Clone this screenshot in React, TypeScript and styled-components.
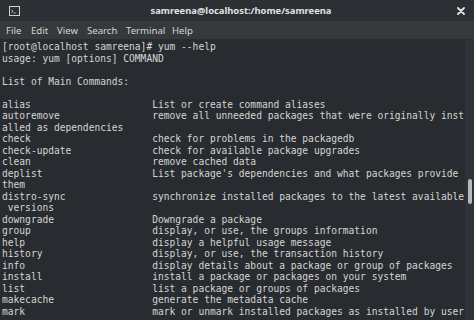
import React from "react";
import styled, { createGlobalStyle } from "styled-components";

const Global = createGlobalStyle`
  html, body { margin: 0; padding: 0; background: #282b2f; }
  body { width: 474px; height: 320px; overflow: hidden; }
`;

const Window = styled.div`
  width: 474px;
  height: 320px;
  display: flex;
  flex-direction: column;
  background: #282b2f;
  overflow: hidden;
`;

const TitleBar = styled.div`
  height: 21px;
  flex: none;
  display: grid;
  grid-template-columns: 30px 1fr 30px;
  align-items: center;
  background: #2c2f33;
  color: #e2e2e2;
  font-family: "Noto Sans", "DejaVu Sans", sans-serif;
  font-weight: 700;
  font-size: 9.4px;
`;

const Title = styled.div`
  text-align: center;
  padding-left: 8px;
`;

const IconBox = styled.div`
  display: flex;
  justify-content: center;
  margin-left: -2px;
`;

const CloseBox = styled.div`
  display: flex;
  justify-content: flex-end;
  padding-right: 9px;
`;

const MenuBar = styled.div`
  height: 18px;
  flex: none;
  display: flex;
  align-items: center;
  padding-left: 6px;
  background: #36393c;
  color: #d4d4d4;
  font-family: "Noto Sans", "DejaVu Sans", sans-serif;
  font-size: 9.6px;
  border-bottom: 1px solid #2a2d30;
`;

const MenuItem = styled.span<{ $w: number }>`
  width: ${(p) => p.$w}px;
`;

const Body = styled.div`
  flex: 1;
  display: flex;
  min-height: 0;
`;

const Screen = styled.pre`
  flex: 1;
  margin: 0;
  padding: 1px 0 0 2px;
  font-family: "DejaVu Sans Mono", monospace;
  font-size: 9.6px;
  line-height: 11.5px;
  color: #d4d6d3;
  white-space: pre;
  overflow: hidden;
`;

const ScrollTrack = styled.div`
  width: 9px;
  flex: none;
  background: #2f3236;
  display: flex;
  justify-content: center;
  padding-top: 139px;
`;

const Thumb = styled.div`
  width: 4px;
  height: 25px;
  border-radius: 2px;
  background: #b8b9ba;
`;

const cmds: [string, string][] = [
  ["alias", "List or create command aliases"],
  ["autoremove", "remove all unneeded packages that were originally inst\nalled as dependencies"],
  ["check", "check for problems in the packagedb"],
  ["check-update", "check for available package upgrades"],
  ["clean", "remove cached data"],
  ["deplist", "List package's dependencies and what packages provide \nthem"],
  ["distro-sync", "synchronize installed packages to the latest available\n versions"],
  ["downgrade", "Downgrade a package"],
  ["group", "display, or use, the groups information"],
  ["help", "display a helpful usage message"],
  ["history", "display, or use, the transaction history"],
  ["info", "display details about a package or group of packages"],
  ["install", "install a package or packages on your system"],
  ["list", "list a package or groups of packages"],
  ["makecache", "generate the metadata cache"],
  ["mark", "mark or unmark installed packages as installed by user"],
];

const text =
  "[root@localhost samreena]# yum --help\n" +
  "usage: yum [options] COMMAND\n\n" +
  "List of Main Commands:\n\n" +
  cmds.map(([c, d]) => c.padEnd(26, " ") + d).join("\n");

const menus: [string, number][] = [
  ["File", 25],
  ["Edit", 26],
  ["View", 30],
  ["Search", 39],
  ["Terminal", 46],
  ["Help", 30],
];

export default function App() {
  return (
    <>
      <Global />
      <Window>
        <TitleBar>
          <IconBox>
            <svg width="11" height="10" viewBox="0 0 11 10">
              <rect x="0.5" y="0.5" width="10" height="9" fill="none" stroke="#d0d0d0" strokeWidth="1" />
              <path d="M2.5 4 L4 5.3 L2.5 6.6" fill="none" stroke="#d0d0d0" strokeWidth="0.9" />
              <path d="M4.5 7 H6.5" stroke="#d0d0d0" strokeWidth="0.9" />
            </svg>
          </IconBox>
          <Title>samreena@localhost:/home/samreena</Title>
          <CloseBox>
            <svg width="8" height="8" viewBox="0 0 8 8">
              <path d="M1 1 L7 7 M7 1 L1 7" stroke="#e4e4e4" strokeWidth="1.8" strokeLinecap="round" />
            </svg>
          </CloseBox>
        </TitleBar>
        <MenuBar>
          {menus.map(([m, w]) => (
            <MenuItem key={m} $w={w}>
              {m}
            </MenuItem>
          ))}
        </MenuBar>
        <Body>
          <Screen>{text}</Screen>
          <ScrollTrack>
            <Thumb />
          </ScrollTrack>
        </Body>
      </Window>
    </>
  );
}
